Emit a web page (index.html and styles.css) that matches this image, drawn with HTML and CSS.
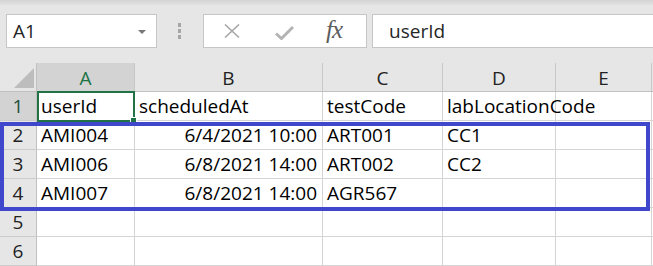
FILE: index.html
```html
<!DOCTYPE html>
<html lang="en">
<head>
    <meta charset="UTF-8">
    <meta name="viewport" content="width=device-width, initial-scale=1.0">
    <title>Book1 - Excel</title>
    <link rel="stylesheet" href="styles.css">
</head>
<body>
    <!-- Name box + formula bar -->
    <div class="toolbar">
        <div class="name-box">
            <span>A1</span>
            <span class="caret"></span>
        </div>
        <div class="grip">
            <span></span><span></span><span></span>
        </div>
        <div class="fx-tools">
            <svg class="icon-x" width="16" height="14" viewBox="0 0 16 14">
                <path d="M1 0.5 L15 13.5 M15 0.5 L1 13.5" stroke="#a8a8a8" stroke-width="1.6" fill="none"/>
            </svg>
            <svg class="icon-check" width="19" height="14" viewBox="0 0 19 14">
                <path d="M1 7.5 L6.5 12.5 L18 1" stroke="#b4b4b4" stroke-width="3" fill="none"/>
            </svg>
            <span class="fx">fx</span>
        </div>
        <div class="formula">userId</div>
    </div>

    <!-- Worksheet grid -->
    <div class="sheet">
        <div class="corner"><span class="tri"></span></div>
        <div class="hd sel">A</div>
        <div class="hd">B</div>
        <div class="hd">C</div>
        <div class="hd">D</div>
        <div class="hd">E</div>
        <div class="hd"></div>

        <div class="rh sel">1</div>
        <div class="c">userId</div>
        <div class="c">scheduledAt</div>
        <div class="c">testCode</div>
        <div class="c">labLocationCode</div>
        <div class="c"></div>
        <div class="c"></div>

        <div class="rh">2</div>
        <div class="c">AMI004</div>
        <div class="c r">6/4/2021 10:00</div>
        <div class="c">ART001</div>
        <div class="c">CC1</div>
        <div class="c"></div>
        <div class="c"></div>

        <div class="rh">3</div>
        <div class="c">AMI006</div>
        <div class="c r">6/8/2021 14:00</div>
        <div class="c">ART002</div>
        <div class="c">CC2</div>
        <div class="c"></div>
        <div class="c"></div>

        <div class="rh">4</div>
        <div class="c">AMI007</div>
        <div class="c r">6/8/2021 14:00</div>
        <div class="c">AGR567</div>
        <div class="c"></div>
        <div class="c"></div>
        <div class="c"></div>

        <div class="rh">5</div>
        <div class="c"></div>
        <div class="c"></div>
        <div class="c"></div>
        <div class="c"></div>
        <div class="c"></div>
        <div class="c"></div>

        <div class="rh">6</div>
        <div class="c"></div>
        <div class="c"></div>
        <div class="c"></div>
        <div class="c"></div>
        <div class="c"></div>
        <div class="c"></div>

        <!-- active cell and highlighted rows -->
        <div class="active-cell"><span class="handle"></span></div>
        <div class="highlight"></div>
    </div>
</body>
</html>
```

FILE: styles.css
```css
* {
    margin: 0;
    padding: 0;
    box-sizing: border-box;
}

body {
    background-color: #e6e6e6;
    font-family: 'Open Sans', 'Noto Sans', sans-serif;
    font-size: 19px;
    color: #000;
    overflow: hidden;
}

/* Toolbar */
.toolbar {
    height: 63px;
    display: flex;
    align-items: flex-start;
    padding-top: 14px;
    background: linear-gradient(#d4d4d4 0, #e2e2e2 5px, #e6e6e6 6px);
}

.name-box {
    margin-left: 6px;
    width: 151px;
    height: 34px;
    background-color: #fff;
    border: 1px solid #c6c6c6;
    display: flex;
    align-items: center;
    justify-content: space-between;
    padding: 0 10px 0 6px;
    color: #262626;
    line-height: 32px;
}

.caret {
    width: 0;
    height: 0;
    border-left: 4px solid transparent;
    border-right: 4px solid transparent;
    border-top: 4px solid #777;
    margin-top: 2px;
}

.grip {
    margin: 9px 22px 0 21px;
    display: flex;
    flex-direction: column;
    gap: 2px;
}

.grip span {
    width: 3px;
    height: 4px;
    background-color: #a6a6a6;
}

.fx-tools {
    width: 164px;
    height: 34px;
    background-color: #fff;
    border: 1px solid #c6c6c6;
    display: flex;
    align-items: center;
}

.icon-x {
    margin-left: 20px;
}

.icon-check {
    margin-left: 35px;
    margin-top: 3px;
}

.fx {
    margin-left: 32px;
    font-family: 'Liberation Serif', serif;
    font-style: italic;
    font-size: 25px;
    color: #5c5c5c;
    margin-top: -3px;
    letter-spacing: -1px;
}

.formula {
    margin-left: 5px;
    flex: 1;
    height: 34px;
    background-color: #fff;
    border: 1px solid #c6c6c6;
    border-right: none;
    padding-left: 16px;
    line-height: 32px;
    color: #262626;
}

/* Sheet */
.sheet {
    position: relative;
    display: grid;
    grid-template-columns: 37px 98px 188px 120px 113px 96px 1fr;
    grid-auto-rows: 29px;
    background-color: #fff;
}

.corner {
    background-color: #e6e6e6;
    border-right: 1px solid #c0c0c0;
    border-bottom: 1px solid #c0c0c0;
    position: relative;
}

.tri {
    position: absolute;
    right: 2px;
    bottom: 3px;
    width: 0;
    height: 0;
    border-left: 20px solid transparent;
    border-bottom: 20px solid #bdbdbd;
}

.hd {
    background-color: #e6e6e6;
    border-right: 1px solid #c8c8c8;
    border-bottom: 1px solid #c0c0c0;
    text-align: center;
    line-height: 26px;
    padding-top: 2px;
    color: #222;
}

.rh {
    background-color: #e6e6e6;
    border-right: 1px solid #c0c0c0;
    border-bottom: 1px solid #cccccc;
    text-align: center;
    line-height: 28px;
    color: #222;
}

.sel {
    background-color: #d3d3d3;
    color: #217346;
}

.rh.sel {
    color: #1e4f3a;
}

.c {
    border-right: 1px solid #d4d4d4;
    border-bottom: 1px solid #d4d4d4;
    line-height: 28px;
    padding: 0 5px 0 4px;
    white-space: nowrap;
}

.r {
    text-align: right;
}

.active-cell {
    position: absolute;
    left: 37px;
    top: 28px;
    width: 98px;
    height: 31px;
    border: 2px solid #217346;
}

.handle {
    position: absolute;
    right: -4px;
    bottom: -4px;
    width: 7px;
    height: 7px;
    background-color: #217346;
    border: 1px solid #fff;
}

.highlight {
    position: absolute;
    left: 0;
    top: 59px;
    width: 650px;
    height: 89px;
    border: 4px solid #3f48cc;
}
```
